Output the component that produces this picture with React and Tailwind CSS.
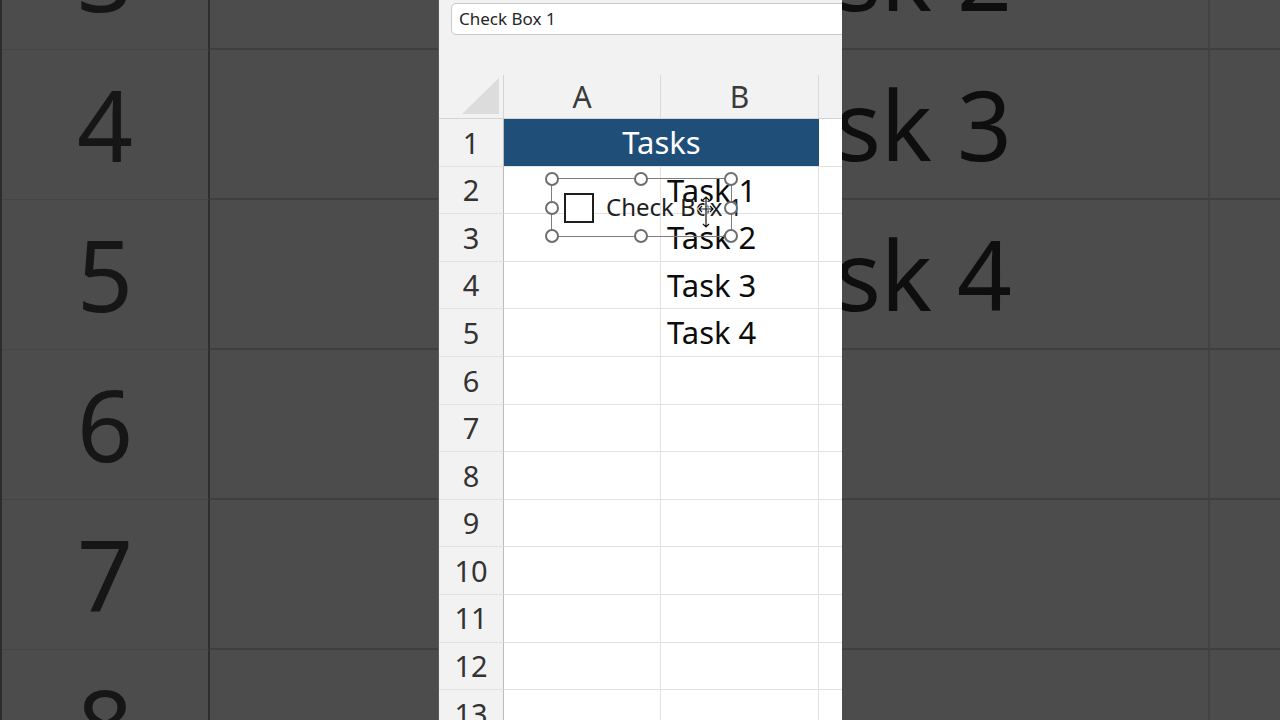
import React from 'react';

const FONT = { fontFamily: '"Noto Sans", "Open Sans", sans-serif' };

const SHEET_ROWS = [
  { n: 1, header: 'Tasks' },
  { n: 2, task: 'Task 1' },
  { n: 3, task: 'Task 2' },
  { n: 4, task: 'Task 3' },
  { n: 5, task: 'Task 4' },
  { n: 6 }, { n: 7 }, { n: 8 }, { n: 9 }, { n: 10 }, { n: 11 }, { n: 12 }, { n: 13 },
];

// Zoomed, darkened copy of the row headers (left side of the video frame)
function LeftBackdrop() {
  const rows = [3, 4, 5, 6, 7, 8];
  return (
    <div className="w-[439px] h-full shrink-0 overflow-hidden bg-[#4c4c4c] border-l-2 border-[#2c2c2c] border-r border-r-[#5a5a5a]">
      <div className="mt-[-100px] flex flex-col">
        {rows.map((n) => (
          <div key={n} className="flex h-[150px]">
            <div className="w-[208px] shrink-0 flex items-center justify-center border-r-2 border-[#2e2e2e] border-b border-b-[#454545] text-[98px] text-[#161616] blur-[0.6px]">
              {n}
            </div>
            <div className="flex-1 border-b-2 border-[#3f3f3f]" />
          </div>
        ))}
      </div>
    </div>
  );
}

// Zoomed, darkened copy of column B (right side of the video frame)
function RightBackdrop() {
  const rows = ['Task 2', 'Task 3', 'Task 4', '', '', ''];
  return (
    <div className="flex-1 h-full overflow-hidden bg-[#4c4c4c]">
      <div className="mt-[-100px] flex flex-col">
        {rows.map((t, i) => (
          <div key={i} className="flex h-[150px]">
            <div className="w-[368px] shrink-0 flex items-center justify-end pr-[196px] overflow-hidden whitespace-nowrap border-r-2 border-[#424242] border-b-2 border-b-[#3f3f3f] text-[96px] text-[#0e0e0e] blur-[0.6px]">
              {t}
            </div>
            <div className="flex-1 border-b-2 border-[#3f3f3f]" />
          </div>
        ))}
      </div>
    </div>
  );
}

function Handle({ className }) {
  return (
    <span
      className={`absolute w-[14px] h-[14px] -ml-[7px] -mt-[7px] rounded-full bg-white border-2 border-[#6e6e6e] ${className}`}
    />
  );
}

function CheckBoxControl() {
  return (
    <div className="absolute left-[112px] top-[178px] w-[181px] h-[59px] border border-[#7e7e7e]">
      <span className="absolute left-[12px] top-[14px] w-[30px] h-[30px] border-2 border-[#1e1e1e] bg-white" />
      <span className="absolute left-[54px] top-[11px] text-[24px] leading-[34px] text-[#1e1e1e] whitespace-nowrap">
        Check Box 1
      </span>
      <Handle className="left-0 top-0" />
      <Handle className="left-[89px] top-0" />
      <Handle className="left-full top-0" />
      <Handle className="left-0 top-1/2" />
      <Handle className="left-full top-1/2" />
      <Handle className="left-0 top-full" />
      <Handle className="left-[89px] top-full" />
      <Handle className="left-full top-full" />
      {/* move cursor */}
      <svg className="absolute left-[144px] top-[16px]" width="20" height="34" viewBox="0 0 20 34" fill="none">
        <path d="M10 2 V32 M3 14 H17 M7 5 L10 2 L13 5 M7 29 L10 32 L13 29 M6 11 L3 14 L6 17 M14 11 L17 14 L14 17" stroke="#ffffff" strokeWidth="3" />
        <path d="M10 2 V32 M3 14 H17 M7 5 L10 2 L13 5 M7 29 L10 32 L13 29 M6 11 L3 14 L6 17 M14 11 L17 14 L14 17" stroke="#111111" strokeWidth="1.2" />
      </svg>
    </div>
  );
}

function Sheet() {
  return (
    <div className="relative w-[403px] h-full shrink-0 overflow-hidden bg-[#f2f2f2]">
      {/* name box */}
      <div className="h-[75px] pt-[3px] pl-[12px]">
        <div className="w-[420px] h-[32px] flex items-center pl-[7px] bg-white border border-[#cacaca] rounded-[5px] text-[17px] text-[#262626]">
          Check Box 1
        </div>
      </div>

      {/* column headers */}
      <div className="flex h-[44px] border-b border-[#d4d4d4]">
        <div className="w-[65px] shrink-0 flex items-end justify-end pr-[4px] pb-[4px] border-r border-[#d4d4d4]">
          <svg width="37" height="36" viewBox="0 0 37 36">
            <polygon points="37,0 37,36 0,36" fill="#dcdcdc" />
          </svg>
        </div>
        <div className="w-[157px] shrink-0 flex items-center justify-center border-r border-[#dadada] text-[30px] text-[#3a3a3a]">A</div>
        <div className="w-[158px] shrink-0 flex items-center justify-center border-r border-[#dadada] text-[30px] text-[#3a3a3a]">B</div>
        <div className="flex-1" />
      </div>

      {/* rows */}
      {SHEET_ROWS.map((r) => (
        <div key={r.n} className="flex h-[47.6px]">
          <div className="w-[65px] shrink-0 flex items-center justify-center border-r border-r-[#bcbcbc] border-b border-b-[#e2e2e2] text-[29px] text-[#333333]">
            {r.n}
          </div>
          {r.header ? (
            <div className="w-[315px] shrink-0 flex items-center justify-center bg-[#1f4e78] text-[31px] text-white border-b border-[#e2e2e2]">
              {r.header}
            </div>
          ) : (
            <>
              <div className="w-[157px] shrink-0 bg-white border-r border-b border-[#e2e2e2]" />
              <div className="w-[158px] shrink-0 flex items-center pl-[6px] bg-white border-r border-b border-[#e2e2e2] text-[31px] text-[#0c0c0c] whitespace-nowrap">
                {r.task}
              </div>
            </>
          )}
          <div className="flex-1 bg-white border-b border-[#e2e2e2]" />
        </div>
      ))}

      <CheckBoxControl />
    </div>
  );
}

export default function App() {
  return (
    <div className="flex w-[1280px] h-[720px] overflow-hidden bg-[#4c4c4c]" style={FONT}>
      <LeftBackdrop />
      <Sheet />
      <RightBackdrop />
    </div>
  );
}
